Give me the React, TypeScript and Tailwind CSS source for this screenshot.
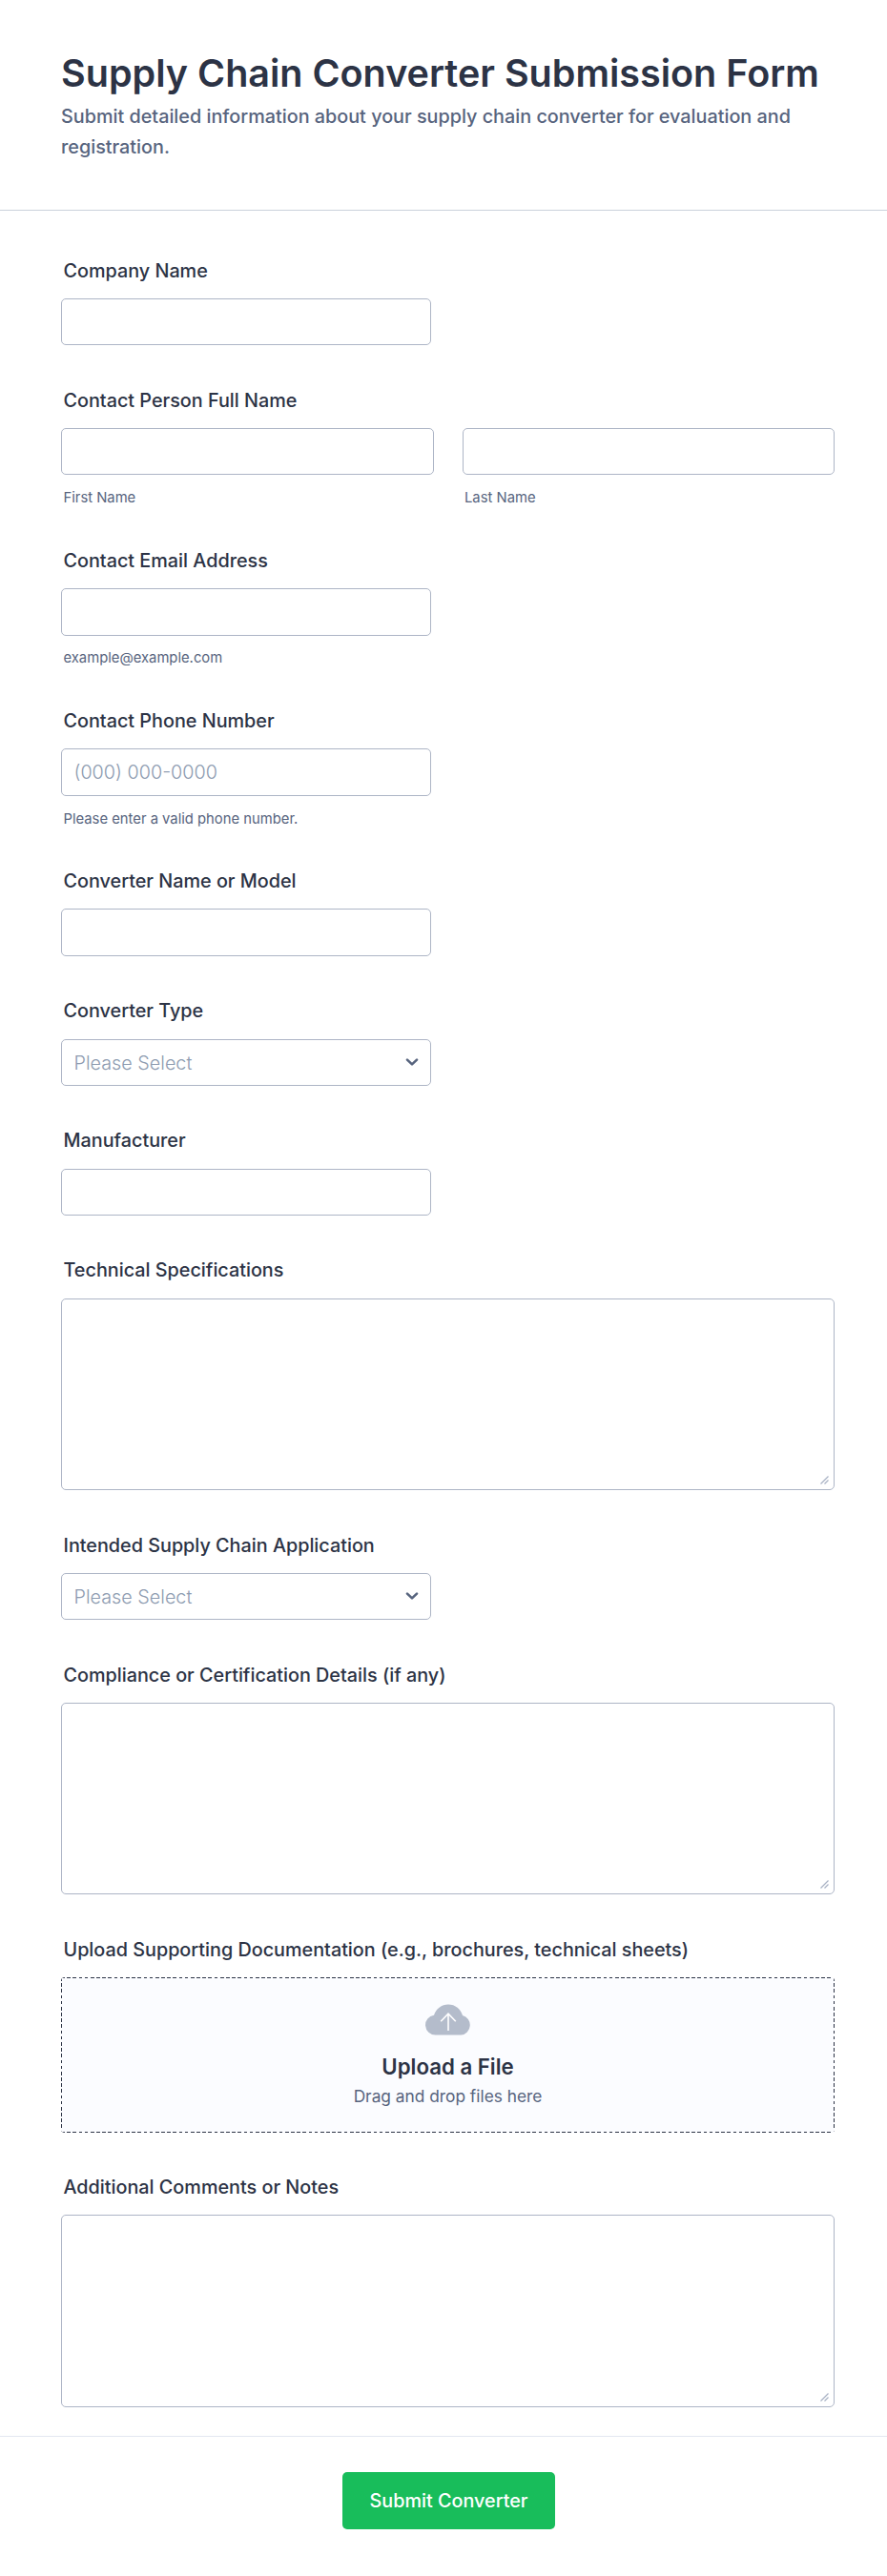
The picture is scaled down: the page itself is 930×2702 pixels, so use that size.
import type { ReactNode } from "react";

const box = "rounded-[5px] border border-[#adb5c6] bg-white";
const control = `${box} h-[49.5px] w-[388px] px-[12.5px] text-[19.79px] font-light text-[#2c3345] outline-none placeholder:text-[#8d9bb0]`;

function Field({ label, height, children }: { label: string; height: string; children: ReactNode }) {
  return (
    <div className={`${height} shrink-0`}>
      <div className="mb-[16.5px] pl-[2.5px] text-[19.79px] leading-[24.7px] font-medium text-[#2c3345]">{label}</div>
      {children}
    </div>
  );
}

function Hint({ children }: { children: ReactNode }) {
  return <div className="mt-[14.8px] pl-[2.5px] text-[14.8px] leading-[18px] text-[#57647e]">{children}</div>;
}

function SelectBox() {
  return (
    <button type="button" className={`${box} flex h-[49.5px] w-[388px] items-center justify-between pr-[12px] pl-[12.5px] text-left`}>
      <span className="pt-[2px] text-[19.79px] leading-6 font-light text-[#8d9bb0]">Please Select</span>
      <svg width="14" height="9" viewBox="0 0 14 9" fill="none">
        <path d="M2 1.6 7 6.4 12 1.6" stroke="#57647e" strokeWidth="2.6" strokeLinecap="round" strokeLinejoin="round" />
      </svg>
    </button>
  );
}

function Area() {
  return (
    <div className={`${box} flex h-[201.5px] items-end justify-end pr-[5px] pb-[5px]`}>
      <svg width="9" height="9" viewBox="0 0 9 9" fill="none">
        <path d="M0.5 8.5 8.5 0.5M4.5 8.5 8.5 4.5" stroke="#a9b2c4" strokeWidth="1.2" />
      </svg>
    </div>
  );
}

function CloudUpload() {
  return (
    <svg width="48" height="33" viewBox="0 0 48 33">
      <path
        d="M10.5 32.5A10.4 10.4 0 0 1 9 11.8C11 5 17 .4 24 .4c7.4 0 13.200 4.800 15 11.700A10.4 10.4 0 0 1 37.500 32.500Z"
        fill="#b4bccb"
      />
      <path d="M24 28V10.500M16.200 18.200 24 10.200 31.800 18.200" fill="none" stroke="#fff" strokeWidth="1.6" />
    </svg>
  );
}

const dashX = "bg-[repeating-linear-gradient(90deg,#2c3345_0_3.7px,transparent_3.7px_6.18px)]";
const dashY = "bg-[repeating-linear-gradient(180deg,#2c3345_0_3.7px,transparent_3.7px_6.18px)]";

function DashedOutline() {
  return (
    <>
      <span className={`absolute inset-x-0 top-0 h-px ${dashX}`} />
      <span className={`absolute inset-x-0 bottom-0 h-px ${dashX}`} />
      <span className={`absolute inset-y-0 left-0 w-px ${dashY}`} />
      <span className={`absolute inset-y-0 right-0 w-px ${dashY}`} />
    </>
  );
}

export default function App() {
  return (
    <form className="flex h-[2702px] w-[930px] flex-col bg-white font-['Inter',sans-serif]">
      <header className="h-[221px] shrink-0 border-b border-[#cbd1dc] px-[64px] pt-[53px]">
        <h1 className="text-[39.5px] leading-[48px] font-semibold whitespace-nowrap text-[#2c3345]">
          Supply Chain Converter Submission Form
        </h1>
        <p className="mt-[5px] text-[19.79px] leading-[32px] font-medium text-[#57647e]">
          Submit detailed information about your supply chain converter for evaluation and registration.
        </p>
      </header>
      <main className="flex h-[2335px] shrink-0 flex-col border-b border-[#e3e7f0] pt-[50.7px] pr-[55px] pl-[64px]">
        <Field label="Company Name" height="h-[136.040px]">
          <input className={control} />
        </Field>
        <Field label="Contact Person Full Name" height="h-[168.190px]">
          <div className="grid grid-cols-2 gap-[30px]">
            <div>
              <input className={`${control} w-full`} />
              <Hint>First Name</Hint>
            </div>
            <div>
              <input className={`${control} w-full`} />
              <Hint>Last Name</Hint>
            </div>
          </div>
        </Field>
        <Field label="Contact Email Address" height="h-[168.190px]">
          <input className={control} />
          <Hint>example@example.com</Hint>
        </Field>
        <Field label="Contact Phone Number" height="h-[168.190px]">
          <input className={control} placeholder="(000) 000-0000" />
          <Hint>Please enter a valid phone number.</Hint>
        </Field>
        <Field label="Converter Name or Model" height="h-[136.040px]">
          <input className={control} />
        </Field>
        <Field label="Converter Type" height="h-[136.040px]">
          <SelectBox />
        </Field>
        <Field label="Manufacturer" height="h-[136.040px]">
          <input className={control} />
        </Field>
        <Field label="Technical Specifications" height="h-[288.150px]">
          <Area />
        </Field>
        <Field label="Intended Supply Chain Application" height="h-[136.040px]">
          <SelectBox />
        </Field>
        <Field label="Compliance or Certification Details (if any)" height="h-[288.150px]">
          <Area />
        </Field>
        <Field label="Upload Supporting Documentation (e.g., brochures, technical sheets)" height="h-[249.300px]">
          <div className="relative flex h-[163px] flex-col items-center overflow-hidden rounded-[4px] bg-[#fbfcff] pt-[28px]">
            <DashedOutline />
            <CloudUpload />
            <div className="mt-[19px] text-[22.26px] leading-[28px] font-semibold text-[#2c3345]">Upload a File</div>
            <div className="mt-[6px] text-[17.31px] leading-[22px] text-[#57647e]">Drag and drop files here</div>
          </div>
        </Field>
        <Field label="Additional Comments or Notes" height="h-[245px]">
          <Area />
        </Field>
      </main>
      <footer className="flex justify-center pt-[37px] pl-[11px]">
        <button type="button" className="h-[60px] w-[223px] rounded-[5px] bg-[#18bd5b] pt-[1.5px] text-[19.79px] font-medium text-white">
          Submit Converter
        </button>
      </footer>
    </form>
  );
}
